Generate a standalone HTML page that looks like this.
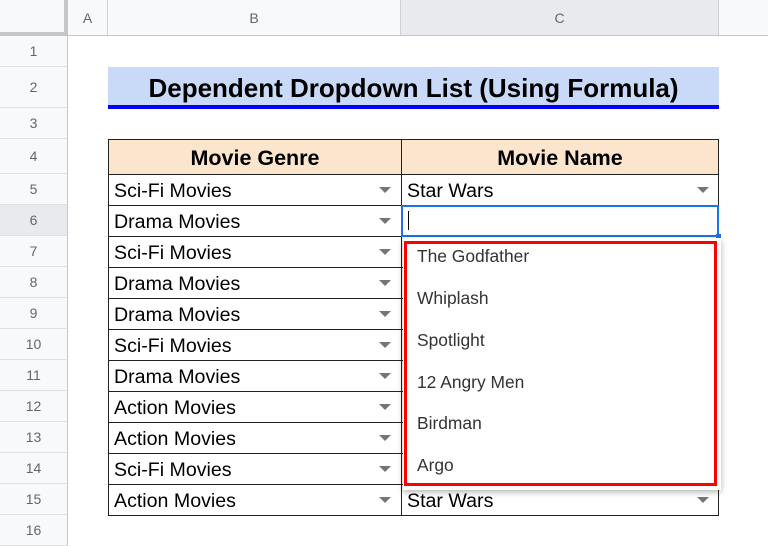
<!DOCTYPE html>
<html><head><meta charset="utf-8"><style>
*{margin:0;padding:0;box-sizing:border-box}
body{width:768px;height:536px;overflow:hidden;background:#fff;font-family:"Liberation Sans",Arial,sans-serif;position:relative}
.a{position:absolute}
.hdr{background:#f8f9fa;color:#666;font-size:14px;text-align:center}
.rn{position:absolute;left:0;width:68px;background:#f8f9fa;border-bottom:1px solid #e0e0e0;border-right:1px solid #c4c7c5;color:#666;font-size:14px;display:flex;align-items:center;justify-content:center}
.cell{position:absolute;border:1px solid #222;font-size:19.6px;color:#000;padding-left:5px;padding-top:2px;display:flex;align-items:center}
.arr{position:absolute;width:0;height:0;border-left:6px solid transparent;border-right:6px solid transparent;border-top:6px solid #757575}
.it{position:absolute;left:417px;font-size:17.4px;color:#333}
</style></head><body>
<div class="a hdr" style="left:0;top:0;width:768px;height:36px;border-bottom:1px solid #c4c7c5"></div>
<div class="a" style="left:0;top:0;width:68px;height:36px;background:#f8f9fa;border-right:4px solid #c4c7c5;border-bottom:4px solid #c4c7c5"></div>
<div class="a hdr" style="left:68px;top:0;width:40px;height:35px;line-height:37px;border-right:1px solid #d0d0d0">A</div>
<div class="a hdr" style="left:108px;top:0;width:293px;height:35px;line-height:37px;border-right:1px solid #d0d0d0">B</div>
<div class="a hdr" style="left:401px;top:0;width:318px;height:35px;line-height:37px;background:#e8eaed;border-right:1px solid #d0d0d0">C</div>
<div class="rn" style="top:36px;height:31px">1</div>
<div class="rn" style="top:67px;height:41px">2</div>
<div class="rn" style="top:108px;height:31px">3</div>
<div class="rn" style="top:139px;height:35px">4</div>
<div class="rn" style="top:174px;height:31px">5</div>
<div class="rn" style="top:205px;height:31px;background:#e8eaed">6</div>
<div class="rn" style="top:236px;height:31px">7</div>
<div class="rn" style="top:267px;height:31px">8</div>
<div class="rn" style="top:298px;height:31px">9</div>
<div class="rn" style="top:329px;height:31px">10</div>
<div class="rn" style="top:360px;height:31px">11</div>
<div class="rn" style="top:391px;height:31px">12</div>
<div class="rn" style="top:422px;height:31px">13</div>
<div class="rn" style="top:453px;height:31px">14</div>
<div class="rn" style="top:484px;height:31px">15</div>
<div class="rn" style="top:515px;height:31px">16</div>
<div class="a" style="left:108px;top:67px;width:611px;height:39px;background:#c9daf8;font-weight:bold;font-size:26px;text-align:center;line-height:43px">Dependent Dropdown List (Using Formula)</div>
<div class="a" style="left:108px;top:105px;width:611px;height:4px;background:#0000ff"></div>
<div class="cell" style="left:108px;top:139px;width:294px;height:36px;background:#fce5cd;font-weight:bold;font-size:21.5px;justify-content:center;padding:2px 0 0 0">Movie Genre</div>
<div class="cell" style="left:401px;top:139px;width:318px;height:36px;background:#fce5cd;font-weight:bold;font-size:21.5px;justify-content:center;padding:2px 0 0 0">Movie Name</div>
<div id="rows"></div>
<script>
var g=["Sci-Fi Movies","Drama Movies","Sci-Fi Movies","Drama Movies","Drama Movies","Sci-Fi Movies","Drama Movies","Action Movies","Action Movies","Sci-Fi Movies","Action Movies"];
var h="";
for(var i=0;i<11;i++){var t=174+i*31;
h+='<div class="cell" style="left:108px;top:'+t+'px;width:294px;height:32px">'+g[i]+'</div>';
h+='<div class="arr" style="left:379px;top:'+(t+13)+'px"></div>';
var c=(i==0||i==10)?'Star Wars':'';
h+='<div class="cell" style="left:401px;top:'+t+'px;width:318px;height:32px">'+c+'</div>';
if(c)h+='<div class="arr" style="left:697px;top:'+(t+13)+'px"></div>';}
document.getElementById("rows").innerHTML=h;
</script>
<div class="a" style="left:401px;top:205px;width:318px;height:32px;border:2px solid #1a73e8;background:#fff"></div>
<div class="a" style="left:408px;top:211px;width:1px;height:19px;background:#000"></div>
<div class="a" style="left:716px;top:234px;width:5px;height:5px;background:#1a73e8"></div>
<div class="a" style="left:403px;top:238px;width:318px;height:252px;background:#fff;box-shadow:0 2px 6px rgba(0,0,0,.3)"></div>
<div class="a" style="left:404px;top:241px;width:313px;height:245px;border:3px solid #ff0000"></div>
<div class="it" style="top:246px">The Godfather</div>
<div class="it" style="top:288px">Whiplash</div>
<div class="it" style="top:330px">Spotlight</div>
<div class="it" style="top:372px">12 Angry Men</div>
<div class="it" style="top:413px">Birdman</div>
<div class="it" style="top:455px">Argo</div>
</body></html>
